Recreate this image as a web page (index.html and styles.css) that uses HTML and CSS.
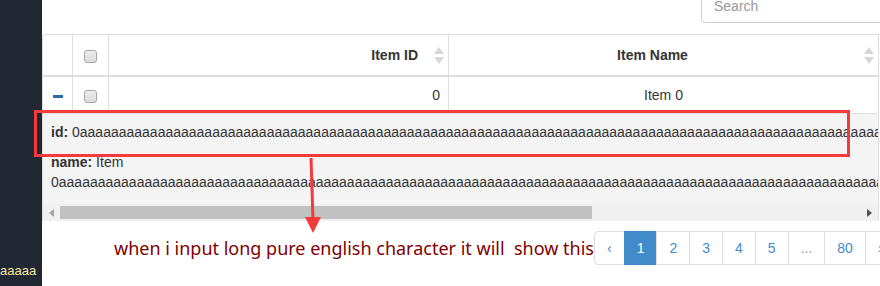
FILE: index.html
```html
<!DOCTYPE html>
<html lang="en">
<head>
    <meta charset="UTF-8">
    <title>Detail view overflow</title>
    <link rel="stylesheet" href="styles.css">
</head>
<body>
    <div class="sidebar">
        <span class="code-tail">aaaaa</span>
    </div>

    <div class="main">
        <div class="toolbar">
            <input type="text" class="search" placeholder="Search">
        </div>

        <div class="table-box">
            <table class="grid">
                <thead>
                    <tr>
                        <th class="col-expand"></th>
                        <th class="col-check"><span class="check"></span></th>
                        <th class="col-id sortable">Item ID<span class="sort"><svg width="10" height="17" viewBox="0 0 10 17"><path d="M5 0 L10 7 L0 7 Z M5 17 L10 10 L0 10 Z" fill="#d6d6d6"/></svg></span></th>
                        <th class="col-name sortable">Item Name<span class="sort"><svg width="10" height="17" viewBox="0 0 10 17"><path d="M5 0 L10 7 L0 7 Z M5 17 L10 10 L0 10 Z" fill="#d6d6d6"/></svg></span></th>
                    </tr>
                </thead>
                <tbody>
                    <tr>
                        <td class="col-expand"><span class="minus"></span></td>
                        <td class="col-check"><span class="check"></span></td>
                        <td class="col-id">0</td>
                        <td class="col-name">Item 0</td>
                    </tr>
                    <tr class="detail">
                        <td colspan="4">
                            <p class="detail-line"><b>id:</b> 0aaaaaaaaaaaaaaaaaaaaaaaaaaaaaaaaaaaaaaaaaaaaaaaaaaaaaaaaaaaaaaaaaaaaaaaaaaaaaaaaaaaaaaaaaaaaaaaaaaaaaaaaaaaaaaaaaaaaaaaaaaaaaaaaa</p>
                            <p class="detail-line name"><b>name:</b> Item<br>0aaaaaaaaaaaaaaaaaaaaaaaaaaaaaaaaaaaaaaaaaaaaaaaaaaaaaaaaaaaaaaaaaaaaaaaaaaaaaaaaaaaaaaaaaaaaaaaaaaaaaaaaaaaaaaaaaaaaaaaaaaaaaaaaa</p>
                        </td>
                    </tr>
                </tbody>
            </table>

            <div class="hscroll">
                <span class="arrow-btn"><svg width="5" height="8" viewBox="0 0 5 8"><path d="M5 0 L0 4 L5 8 Z" fill="#a3a3a3"/></svg></span>
                <div class="track"><div class="thumb"></div></div>
                <span class="arrow-btn"><svg width="5" height="8" viewBox="0 0 5 8"><path d="M0 0 L5 4 L0 8 Z" fill="#505050"/></svg></span>
            </div>
        </div>

        <div class="footer">
            <span class="note">when i input long pure english character it will &nbsp;show this</span>
            <ul class="pagination">
                <li><a>&lsaquo;</a></li>
                <li class="active"><a>1</a></li>
                <li><a>2</a></li>
                <li><a>3</a></li>
                <li><a>4</a></li>
                <li><a>5</a></li>
                <li class="gap"><a>...</a></li>
                <li><a>80</a></li>
                <li><a>&rsaquo;</a></li>
            </ul>
        </div>
    </div>

    <!-- annotation drawn over the screenshot -->
    <div class="mark-box"></div>
    <svg class="mark-arrow" width="30" height="80" viewBox="0 0 30 80">
        <path d="M10 0 L12 62" stroke="#f33b3b" stroke-width="3" fill="none"/>
        <path d="M4 59 L20 59 L12 75 Z" fill="#f33b3b"/>
    </svg>
</body>
</html>
```

FILE: styles.css
```css
body {
    margin: 0;
    height: 286px;
    display: flex;
    overflow: hidden;
    position: relative;
    background-color: #fff;
    color: #333;
    font-family: "Liberation Sans", Arial, sans-serif;
    font-size: 14px;
}

.sidebar {
    width: 42px;
    flex-shrink: 0;
    background-color: #212733;
    display: flex;
    flex-direction: column;
    justify-content: flex-end;
    overflow: hidden;
}

.code-tail {
    color: #f5e9a0;
    font-size: 13px;
    line-height: 16px;
    margin-bottom: 7px;
    white-space: nowrap;
}

.main {
    flex: 1;
    min-width: 0;
}

.toolbar {
    display: flex;
    justify-content: flex-end;
    height: 23px;
    margin-bottom: 11px;
}

.search {
    box-sizing: border-box;
    width: 188px;
    height: 34px;
    margin-top: -11px;
    margin-right: -9px;
    flex-shrink: 0;
    padding: 6px 12px;
    border: 1px solid #ccc;
    border-radius: 4px;
    font-family: inherit;
    font-size: 14px;
    color: #555;
}

.search::placeholder {
    color: #999;
}

.table-box {
    box-sizing: border-box;
    width: 837px;
    border: 1px solid #ddd;
    border-bottom: none;
    border-radius: 4px 0 0 0;
    overflow: hidden;
}

.grid {
    border-collapse: collapse;
    width: 100%;
    table-layout: fixed;
}

.grid th,
.grid td {
    border-left: 1px solid #ddd;
    padding: 8px;
    line-height: 20px;
    white-space: nowrap;
}

.grid th:first-child,
.grid td:first-child {
    border-left: none;
}

.grid th {
    height: 24px;
    font-weight: bold;
    border-bottom: 2px solid #ddd;
}

.grid tbody tr:first-child td {
    height: 19px;
    border-bottom: 1px solid #ddd;
}

.col-expand {
    width: 13px;
    text-align: center;
}

.col-check {
    width: 19px;
    text-align: center;
}

.col-id {
    width: 323px;
    text-align: right;
}

.grid th.sortable {
    position: relative;
    padding-right: 30px;
}

th.col-id {
    width: 301px;
}

.col-name {
    text-align: center;
}

.sort {
    position: absolute;
    right: 4px;
    top: 12px;
    line-height: 0;
}

.check {
    display: inline-block;
    box-sizing: border-box;
    width: 13px;
    height: 13px;
    vertical-align: middle;
    border: 1px solid #a6a6a6;
    border-radius: 3px;
    background: linear-gradient(#ececec, #dcdcdc);
}

.minus {
    display: inline-block;
    width: 10px;
    height: 3px;
    vertical-align: middle;
    background-color: #2d6ca2;
}

.detail td {
    background-color: #f4f4f4;
    padding: 8px 8px 2px;
    white-space: normal;
}

.detail-line {
    margin: 0 0 10px;
    white-space: nowrap;
}

.hscroll {
    display: flex;
    height: 17px;
    background-color: #f0f0f0;
}

.arrow-btn {
    width: 17px;
    display: flex;
    align-items: center;
    justify-content: center;
}

.track {
    flex: 1;
    padding: 2px 0;
}

.thumb {
    width: 532px;
    height: 13px;
    background-color: #c1c1c1;
}

.footer {
    display: flex;
    align-items: center;
    margin-top: 10px;
}

.note {
    flex-shrink: 0;
    width: 480px;
    margin-left: 72px;
    white-space: nowrap;
    color: #800000;
    font-family: "Noto Sans", sans-serif;
    font-size: 18px;
}

.pagination {
    display: flex;
    flex-shrink: 0;
    margin: 0;
    padding: 0;
    list-style: none;
}

.pagination li a {
    display: block;
    padding: 6px 12px;
    margin-left: -1px;
    line-height: 20px;
    border: 1px solid #ddd;
    color: #428bca;
    background-color: #fff;
}

.pagination li:first-child a {
    margin-left: 0;
    border-radius: 4px 0 0 4px;
}

.pagination li.active a {
    background-color: #428bca;
    border-color: #428bca;
    color: #fff;
}

.pagination li.gap a {
    color: #999;
}

.mark-box {
    position: absolute;
    left: 34px;
    top: 110px;
    width: 810px;
    height: 41px;
    border: 3px solid #f33b3b;
}

.mark-arrow {
    position: absolute;
    left: 301px;
    top: 158px;
}
```
